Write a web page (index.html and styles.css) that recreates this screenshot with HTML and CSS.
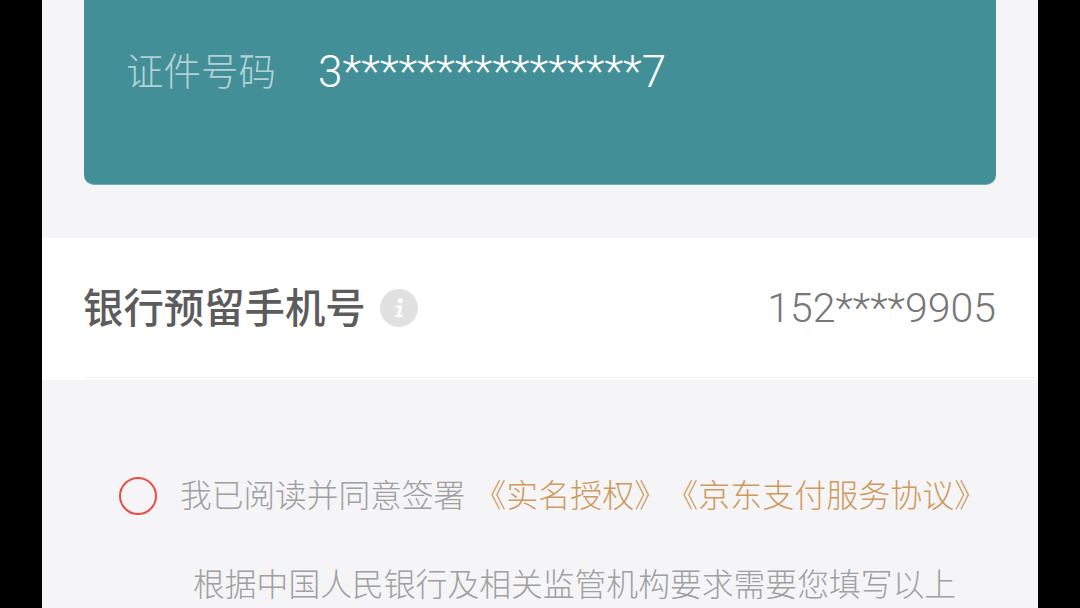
FILE: index.html
```html
<!DOCTYPE html>
<html lang="zh-CN">
<head>
  <meta charset="UTF-8">
  <meta name="viewport" content="width=device-width, initial-scale=1.0">
  <title>实名认证</title>
  <link rel="stylesheet" href="styles.css">
</head>
<body>

  <div class="phone">

    <!-- 证件卡片 -->
    <div class="card">
      <span class="card-label">证件号码</span>
      <span class="card-value">3****************7</span>
    </div>

    <!-- 手机号 -->
    <div class="mobile-row">
      <div class="mobile-inner">
        <span class="mobile-label">银行预留手机号</span>
        <span class="info-icon">
          <svg width="38" height="38" viewBox="0 0 38 38">
            <circle cx="19" cy="19" r="19" fill="#e1e1e1"/>
            <circle cx="20.2" cy="11.6" r="2.6" fill="#fff"/>
            <path d="M15.6 16.4h6.6l-1.9 9.4h2.4l-.5 2.2h-7l.5-2.2h1.7l1.4-7.2h-3.6z" fill="#fff"/>
          </svg>
        </span>
        <span class="mobile-value">152****9905</span>
      </div>
    </div>

    <!-- 协议 -->
    <div class="agree">
      <span class="radio"></span>
      <span class="agree-text">我已阅读并同意签署</span>
      <span class="agree-link">《实名授权》</span>
      <span class="agree-link agree-link-next">《京东支付服务协议》</span>
    </div>

    <p class="notice">根据中国人民银行及相关监管机构要求需要您填写以上</p>

  </div>

</body>
</html>
```

FILE: styles.css
```css
html, body{
  margin: 0;
  height: 100%;
  overflow: hidden;
  background-color: #000;
}

body{
  font-family: "Noto Sans CJK SC", "Noto Sans", sans-serif;
}

.phone{
  width: 996px;
  height: 608px;
  margin-left: 42px;
  background-color: #f5f5f8;
  overflow: hidden;
}

.card{
  display: flex;
  align-items: center;
  box-sizing: border-box;
  height: 185px;
  margin: 0 42px;
  padding: 0 0 44px 42px;
  background-color: #428f98;
  border-bottom: 1px solid #6fb0b6;
  border-radius: 0 0 10px 10px;
}

.card-label{
  width: 192px;
  margin-bottom: 2px;
  font-size: 37.5px;
  font-weight: 300;
  line-height: 52px;
  color: #b3d2d5;
}

.card-value{
  margin-top: 4px;
  font-family: Roboto, "Noto Sans", sans-serif;
  font-size: 44.1px;
  font-weight: 300;
  line-height: 52px;
  color: #fff;
}

.mobile-row{
  height: 142px;
  margin-top: 53px;
  padding-left: 42px;
  background-color: #fff;
}

.mobile-inner{
  display: flex;
  align-items: center;
  box-sizing: border-box;
  height: 140px;
  padding-right: 42px;
  border-bottom: 1px solid #f2f2f2;
}

.mobile-label{
  width: 284px;
  margin-left: -1px;
  margin-bottom: 4px;
  font-size: 40.4px;
  font-weight: 500;
  line-height: 56px;
  white-space: nowrap;
  color: #5c5c5c;
}

.info-icon{
  display: block;
  width: 38px;
  height: 38px;
  margin-left: 13px;
}

.mobile-value{
  margin-left: auto;
  font-family: Roboto, "Noto Sans", sans-serif;
  font-size: 41px;
  font-weight: 300;
  line-height: 56px;
  color: #777;
}

.agree{
  display: flex;
  align-items: center;
  height: 46px;
  margin-top: 93px;
  padding-left: 77px;
}

.radio{
  box-sizing: border-box;
  width: 38px;
  height: 38px;
  margin-right: 23px;
  border: 2px solid #ee4b45;
  border-radius: 50%;
}

.agree-text{
  margin-bottom: 6px;
  font-size: 31.7px;
  font-weight: 300;
  color: #a0a0a0;
}

.agree-link{
  margin-left: 9px;
  margin-bottom: 6px;
  font-size: 32px;
  font-weight: 300;
  color: #cf9a5c;
}

.agree-link-next{
  margin-left: 0;
}

.notice{
  margin: 40px 0 0;
  padding-left: 151px;
  font-size: 31.8px;
  font-weight: 300;
  line-height: 46px;
  white-space: nowrap;
  color: #a0a0a0;
}
```
